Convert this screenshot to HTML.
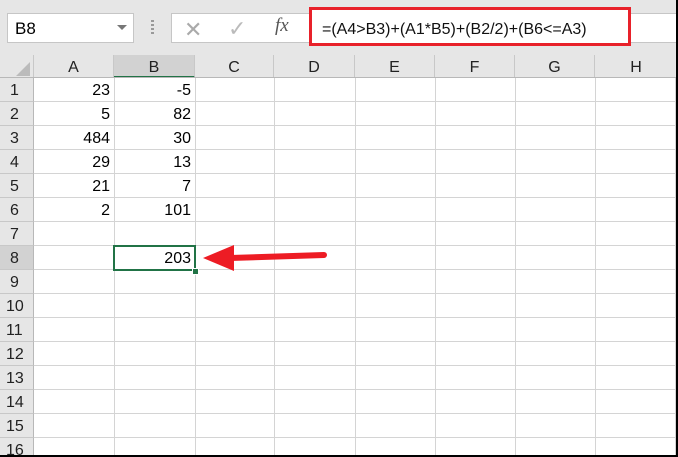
<!DOCTYPE html><html><head><style>
html,body{margin:0;width:678px;height:457px;overflow:hidden}
body{background:#fff;font-family:"Liberation Sans",Arial,sans-serif;position:relative}
.a{position:absolute}
.tb{left:0;top:0;width:678px;height:55px;background:#e6e6e6}
.box{background:#fff;border:1px solid #c6c6c6;box-sizing:border-box}
.ch{top:55px;height:23px;background:#e6e6e6;border-right:1px solid #c8c8c8;box-sizing:border-box;text-align:center;font-size:16px;line-height:26px;color:#222}
.rh{left:0;width:34px;height:24px;background:#e6e6e6;border-bottom:1px solid #c8c8c8;border-right:1px solid #b8b8b8;box-sizing:border-box;font-size:16px;line-height:26px;color:#222;padding-left:10px}
.vl{top:78px;width:1px;height:379px;background:#d4d4d4}
.hl{left:34px;width:644px;height:1px;background:#d4d4d4}
.c{font-size:16px;line-height:26px;text-align:right;color:#000}
</style></head><body>
<div class="a tb"></div>
<div class="a box" style="left:7px;top:13px;width:127px;height:30px;font-size:17px;line-height:30px;padding-left:7px">B8</div>
<div class="a" style="left:117px;top:25px;width:0;height:0;border-left:5px solid transparent;border-right:5px solid transparent;border-top:5px solid #777"></div>
<div class="a" style="left:151px;top:20px;width:3px;height:14px;background:repeating-linear-gradient(#999 0 2px,transparent 2px 4px)"></div>
<div class="a box" style="left:171px;top:13px;width:507px;height:30px"></div>
<div class="a" style="left:184px;top:17px;font-size:22px;color:#aaa">✕</div>
<div class="a" style="left:228px;top:16px;font-size:22px;color:#bbb">✓</div>
<div class="a" style="left:275px;top:15px;font-size:19px;font-style:italic;font-family:'Liberation Serif',serif;color:#555">fx</div>
<div class="a" style="left:309px;top:7px;width:322px;height:39px;border:3px solid #e8212a;box-sizing:border-box;background:#fff"></div>
<div class="a" style="left:322px;top:18px;font-size:16px;line-height:24px;color:#111">=(A4&gt;B3)+(A1*B5)+(B2/2)+(B6&lt;=A3)</div>
<div class="a" style="left:0;top:55px;width:34px;height:23px;background:#e6e6e6;border-right:1px solid #c8c8c8;box-sizing:border-box"></div>
<div class="a" style="left:16px;top:62px;width:0;height:0;border-left:14px solid transparent;border-bottom:14px solid #bbb"></div>
<div class="a ch" style="left:34px;width:80px">A</div>
<div class="a ch" style="left:114px;width:81px;background:#d2d2d2;border-bottom:2px solid #217346;color:#222">B</div>
<div class="a ch" style="left:195px;width:79px">C</div>
<div class="a ch" style="left:274px;width:81px">D</div>
<div class="a ch" style="left:355px;width:80px">E</div>
<div class="a ch" style="left:435px;width:80px">F</div>
<div class="a ch" style="left:515px;width:80px">G</div>
<div class="a ch" style="left:595px;width:83px">H</div>
<div class="a" style="left:0;top:77px;width:678px;height:1px;background:#b8b8b8"></div>
<div class="a rh" style="top:78px">1</div><div class="a rh" style="top:102px">2</div><div class="a rh" style="top:126px">3</div><div class="a rh" style="top:150px">4</div><div class="a rh" style="top:174px">5</div><div class="a rh" style="top:198px">6</div><div class="a rh" style="top:222px">7</div><div class="a rh" style="top:246px;background:#d2d2d2">8</div><div class="a rh" style="top:270px">9</div><div class="a rh" style="top:294px;padding-left:6px">10</div><div class="a rh" style="top:318px;padding-left:6px">11</div><div class="a rh" style="top:342px;padding-left:6px">12</div><div class="a rh" style="top:366px;padding-left:6px">13</div><div class="a rh" style="top:390px;padding-left:6px">14</div><div class="a rh" style="top:414px;padding-left:6px">15</div><div class="a rh" style="top:438px;padding-left:6px">16</div>
<div class="a vl" style="left:114px"></div><div class="a vl" style="left:195px"></div><div class="a vl" style="left:274px"></div><div class="a vl" style="left:355px"></div><div class="a vl" style="left:435px"></div><div class="a vl" style="left:515px"></div><div class="a vl" style="left:595px"></div><div class="a vl" style="left:675px"></div>
<div class="a hl" style="top:101px"></div><div class="a hl" style="top:125px"></div><div class="a hl" style="top:149px"></div><div class="a hl" style="top:173px"></div><div class="a hl" style="top:197px"></div><div class="a hl" style="top:221px"></div><div class="a hl" style="top:245px"></div><div class="a hl" style="top:269px"></div><div class="a hl" style="top:293px"></div><div class="a hl" style="top:317px"></div><div class="a hl" style="top:341px"></div><div class="a hl" style="top:365px"></div><div class="a hl" style="top:389px"></div><div class="a hl" style="top:413px"></div><div class="a hl" style="top:437px"></div>
<div class="a c" style="left:34px;width:76px;top:78px">23</div><div class="a c" style="left:114px;width:77px;top:78px">-5</div>
<div class="a c" style="left:34px;width:76px;top:102px">5</div><div class="a c" style="left:114px;width:77px;top:102px">82</div>
<div class="a c" style="left:34px;width:76px;top:126px">484</div><div class="a c" style="left:114px;width:77px;top:126px">30</div>
<div class="a c" style="left:34px;width:76px;top:150px">29</div><div class="a c" style="left:114px;width:77px;top:150px">13</div>
<div class="a c" style="left:34px;width:76px;top:174px">21</div><div class="a c" style="left:114px;width:77px;top:174px">7</div>
<div class="a c" style="left:34px;width:76px;top:198px">2</div><div class="a c" style="left:114px;width:77px;top:198px">101</div>
<div class="a" style="left:113px;top:245px;width:83px;height:26px;border:2px solid #217346;box-sizing:border-box"></div>
<div class="a" style="left:192px;top:268px;width:5px;height:5px;background:#217346;border:1px solid #fff"></div>
<div class="a c" style="left:114px;width:77px;top:246px">203</div>
<svg class="a" style="left:200px;top:240px" width="130" height="36"><polygon points="3,18 34,5 34,31" fill="#ed1c24"/><line x1="30" y1="18" x2="124" y2="15" stroke="#ed1c24" stroke-width="6" stroke-linecap="round"/></svg>
<div class="a" style="left:676px;top:0;width:2px;height:457px;background:#000"></div>
<div class="a" style="left:0;top:455px;width:678px;height:2px;background:#000"></div>
</body></html>
